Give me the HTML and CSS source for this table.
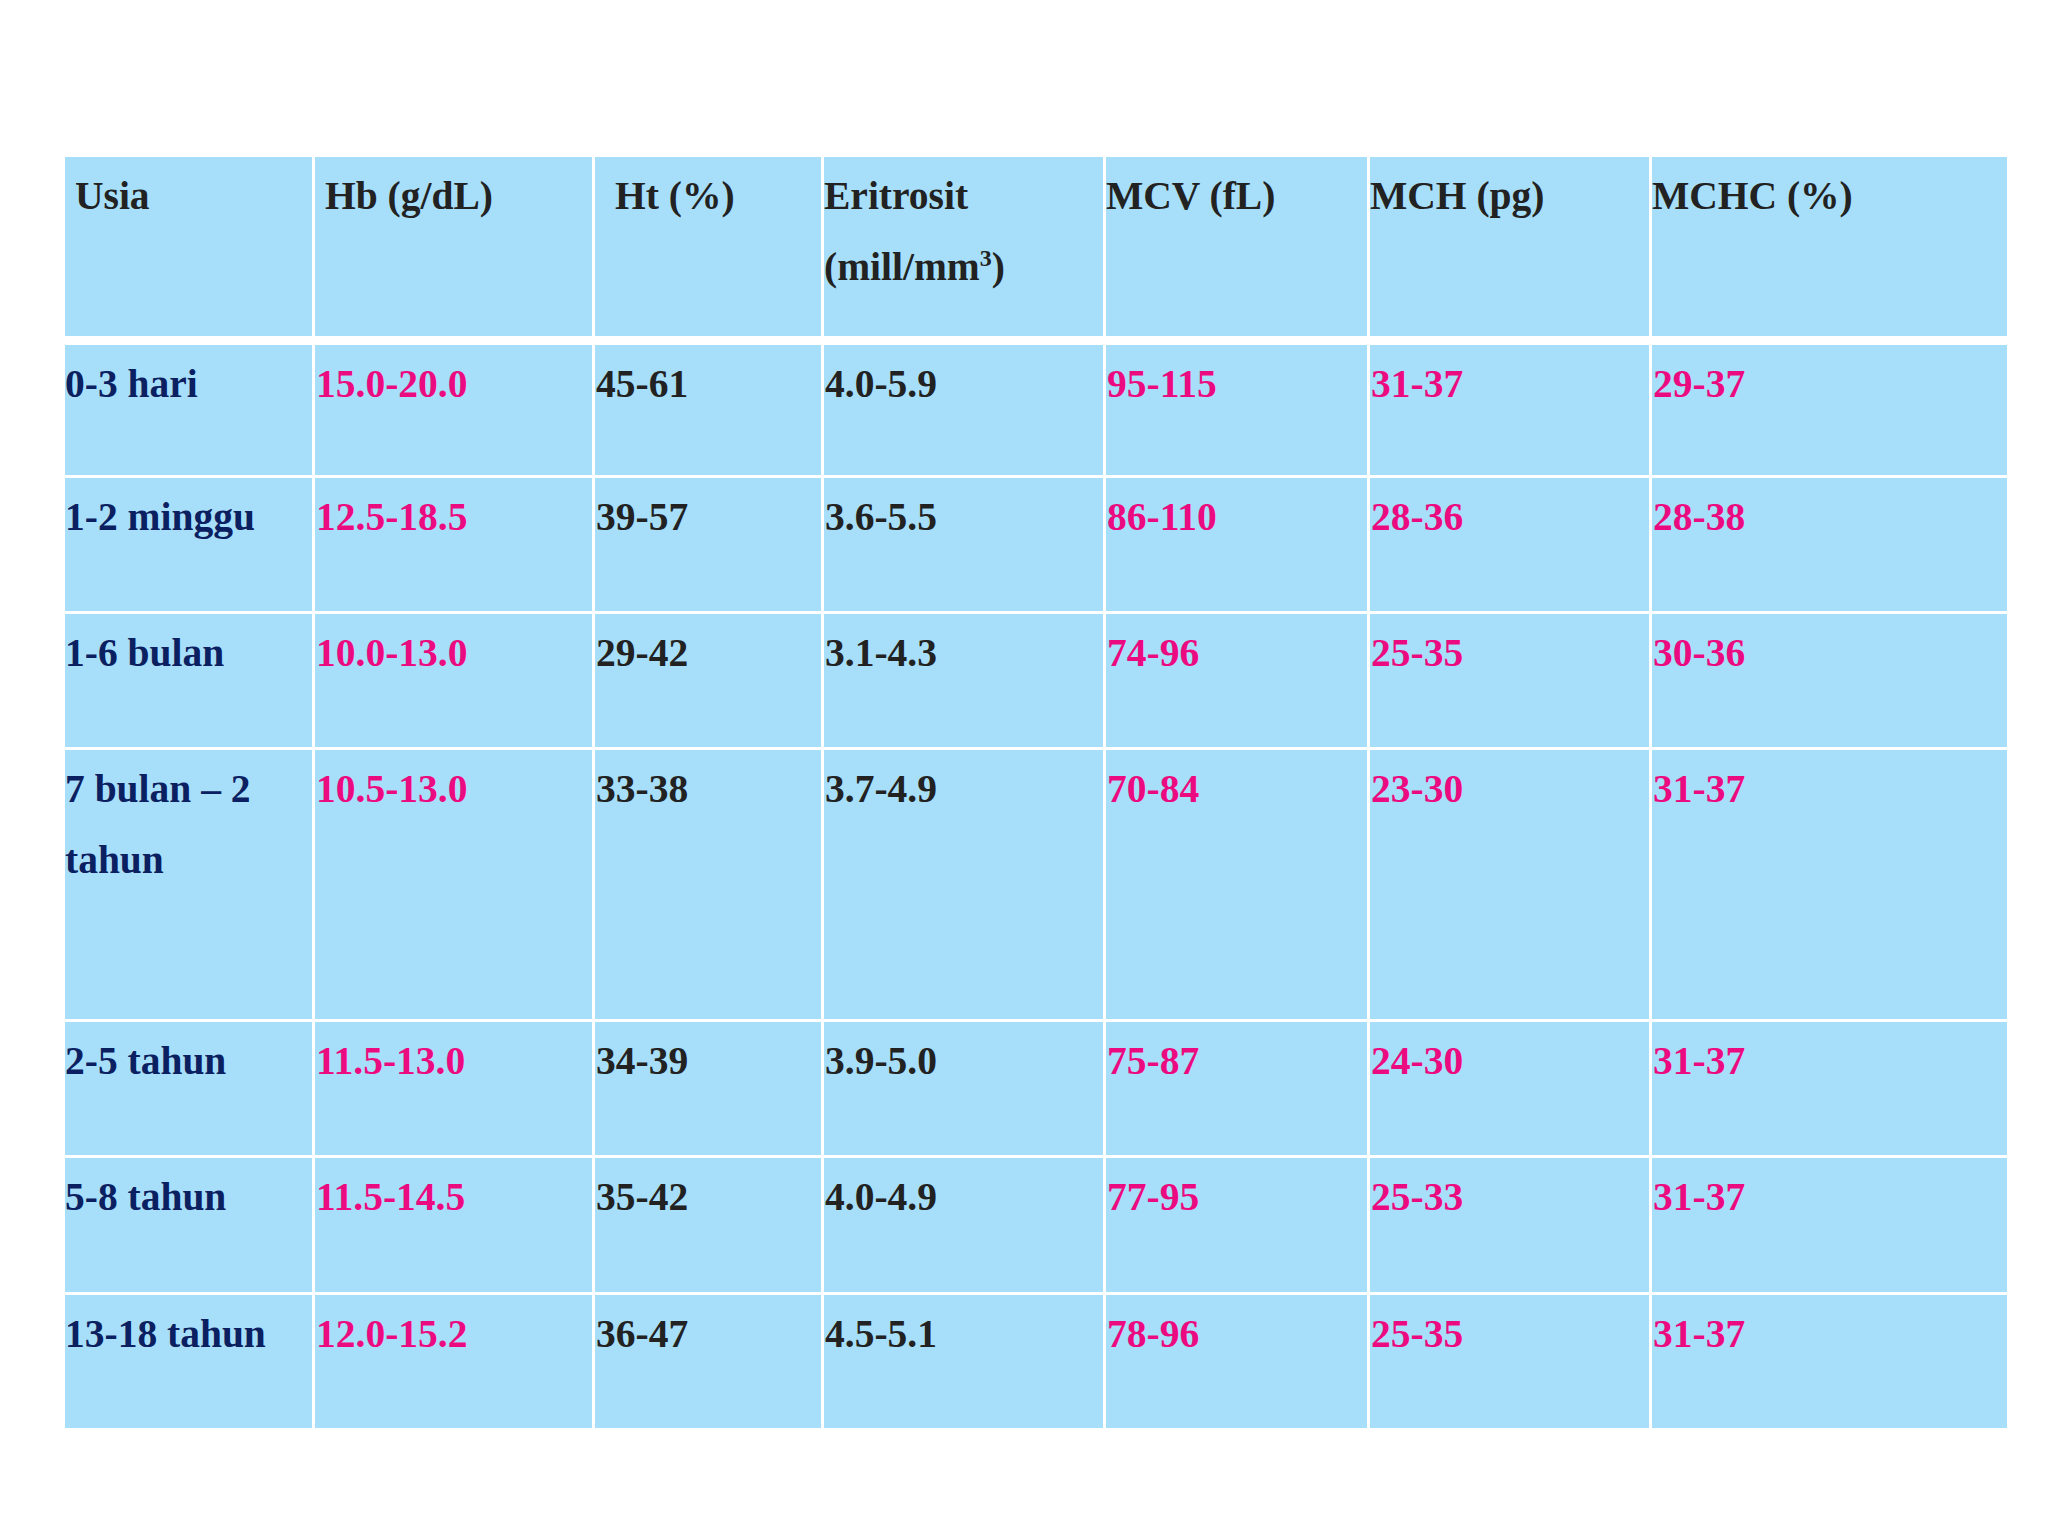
FILE: index.html
```html
<!DOCTYPE html>
<html lang="id">
<head>
<meta charset="utf-8">
<title>Nilai normal hematologi anak</title>
<link rel="stylesheet" href="styles.css">
</head>
<body>
<main class="page">
  <div class="grid" role="table">
    <div class="cell head ind1">Usia</div>
    <div class="cell head ind1">Hb (g/dL)</div>
    <div class="cell head ind2">Ht (%)</div>
    <div class="cell head">Eritrosit<br>(mill/mm<sup>3</sup>)</div>
    <div class="cell head">MCV (fL)</div>
    <div class="cell head">MCH (pg)</div>
    <div class="cell head">MCHC (%)</div>

    <div class="cell age">0-3 hari</div>
    <div class="cell pink">15.0-20.0</div>
    <div class="cell dark">45-61</div>
    <div class="cell dark">4.0-5.9</div>
    <div class="cell pink">95-115</div>
    <div class="cell pink">31-37</div>
    <div class="cell pink">29-37</div>

    <div class="cell age">1-2 minggu</div>
    <div class="cell pink">12.5-18.5</div>
    <div class="cell dark">39-57</div>
    <div class="cell dark">3.6-5.5</div>
    <div class="cell pink">86-110</div>
    <div class="cell pink">28-36</div>
    <div class="cell pink">28-38</div>

    <div class="cell age">1-6 bulan</div>
    <div class="cell pink">10.0-13.0</div>
    <div class="cell dark">29-42</div>
    <div class="cell dark">3.1-4.3</div>
    <div class="cell pink">74-96</div>
    <div class="cell pink">25-35</div>
    <div class="cell pink">30-36</div>

    <div class="cell age wrap">7 bulan – 2 tahun</div>
    <div class="cell pink">10.5-13.0</div>
    <div class="cell dark">33-38</div>
    <div class="cell dark">3.7-4.9</div>
    <div class="cell pink">70-84</div>
    <div class="cell pink">23-30</div>
    <div class="cell pink">31-37</div>

    <div class="cell age">2-5 tahun</div>
    <div class="cell pink">11.5-13.0</div>
    <div class="cell dark">34-39</div>
    <div class="cell dark">3.9-5.0</div>
    <div class="cell pink">75-87</div>
    <div class="cell pink">24-30</div>
    <div class="cell pink">31-37</div>

    <div class="cell age">5-8 tahun</div>
    <div class="cell pink">11.5-14.5</div>
    <div class="cell dark">35-42</div>
    <div class="cell dark">4.0-4.9</div>
    <div class="cell pink">77-95</div>
    <div class="cell pink">25-33</div>
    <div class="cell pink">31-37</div>

    <div class="cell age">13-18 tahun</div>
    <div class="cell pink">12.0-15.2</div>
    <div class="cell dark">36-47</div>
    <div class="cell dark">4.5-5.1</div>
    <div class="cell pink">78-96</div>
    <div class="cell pink">25-35</div>
    <div class="cell pink">31-37</div>
  </div>
</main>
</body>
</html>
```

FILE: styles.css
```css
html, body {
  margin: 0;
  padding: 0;
  background: #ffffff;
}

.page {
  width: 2048px;
  height: 1536px;
  box-sizing: border-box;
  padding: 157px 0 0 65px;
  font-family: "Liberation Serif", "Times New Roman", serif;
  font-weight: bold;
  font-size: 39.5px;
  line-height: 71px;
}

.grid {
  display: grid;
  grid-template-columns: 247px 277px 226px 279px 261px 279px 355px;
  grid-template-rows: 185px 130px 133px 133px 269px 133px 134px 133px;
  column-gap: 3px;
  row-gap: 3px;
}

.cell {
  background: #a7dffa;
  padding: 4px 0 0 1px;
  box-sizing: border-box;
  white-space: nowrap;
}

.head {
  margin-bottom: 6px;
  color: #222222;
  padding-left: 0;
}

.ind1 {
  padding-left: 10px;
}

.ind2 {
  padding-left: 20px;
}

.head sup {
  font-size: 24px;
  line-height: 0;
  vertical-align: 14px;
}

.age {
  color: #0b2060;
  padding-left: 0;
}

.wrap {
  white-space: normal;
}

.pink {
  color: #ec0a80;
}

.dark {
  color: #222222;
}
```
